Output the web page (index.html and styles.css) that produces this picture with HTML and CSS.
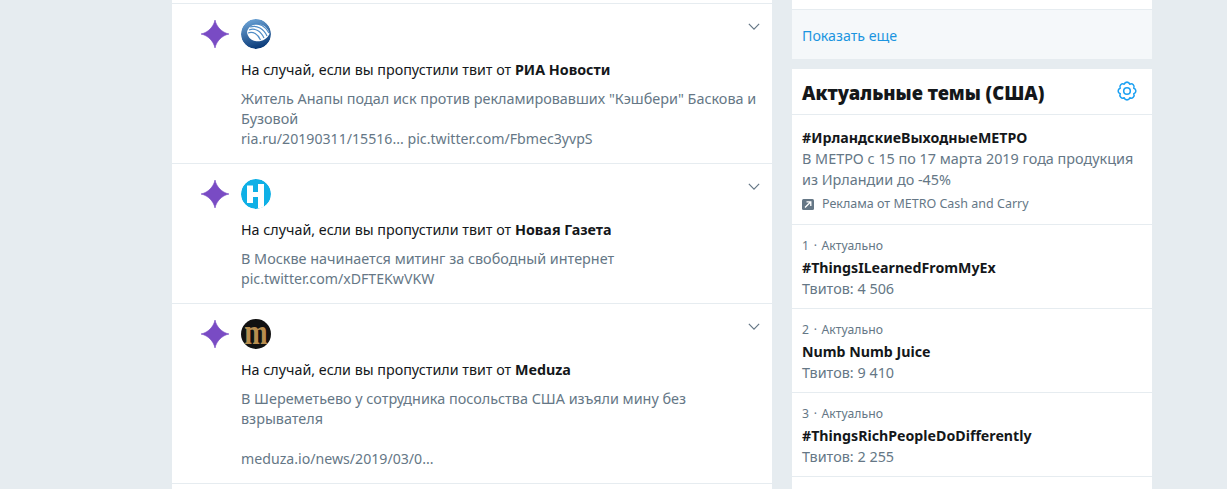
FILE: index.html
```html
<!DOCTYPE html>
<html lang="ru">
<head>
    <meta charset="UTF-8">
    <meta name="viewport" content="width=device-width, initial-scale=1.0">
    <title>Twitter</title>
    <link rel="stylesheet" href="styles.css">
</head>
<body>
    <div class="page">
        <main class="timeline">
            <div class="top-strip"></div>

            <article class="tweet tweet-ria">
                <svg class="star" viewBox="0 0 30 30"><path d="M15 1C16.500 8 22 13.500 29 15C22 16.500 16.500 22 15 29C13.500 22 8 16.500 1 15C8 13.500 13.500 8 15 1Z"/></svg>
                <div class="tweet-body">
                    <svg class="avatar" viewBox="0 0 30 30">
                        <defs>
                            <linearGradient id="riaBlue" x1="0.2" y1="0" x2="0.5" y2="1">
                                <stop offset="0" stop-color="#6fa6d8"/>
                                <stop offset="1" stop-color="#0a3a78"/>
                            </linearGradient>
                        </defs>
                        <circle cx="15" cy="15" r="15" fill="url(#riaBlue)"/>
                        <path d="M6 13C8 6 15 4 21 6C26 8 28 12 28.5 15C26 20 20 23.5 14 22C9 21 6.5 17 6 13Z" fill="#fff"/>
                        <g fill="none" stroke="#4f8cc6" stroke-width="1.2">
                            <path d="M11 5.5C18 3 25 8 28 14"/>
                            <path d="M9 8C16 5.5 23 10 26 17"/>
                            <path d="M8 11C14 8.5 20 12 23 19"/>
                            <path d="M7 14C12 12 17 15 19.5 21"/>
                        </g>
                    </svg>
                    <p class="reason">На случай, если вы пропустили твит от <b>РИА Новости</b></p>
                    <p class="text">Житель Анапы подал иск против рекламировавших "Кэшбери" Баскова и Бузовой<br><span class="link">ria.ru/20190311/15516... pic.twitter.com/Fbmec3yvpS</span></p>
                </div>
                <svg class="caret" viewBox="0 0 14 8"><path d="M1 1L7 7L13 1"/></svg>
            </article>

            <article class="tweet tweet-novaya">
                <svg class="star" viewBox="0 0 30 30"><path d="M15 1C16.500 8 22 13.500 29 15C22 16.500 16.500 22 15 29C13.500 22 8 16.500 1 15C8 13.500 13.500 8 15 1Z"/></svg>
                <div class="tweet-body">
                    <svg class="avatar" viewBox="0 0 30 30">
                        <circle cx="15" cy="15" r="15" fill="#0fb0e6"/>
                        <path d="M6 6.5H12V13H17V5H23V29H17V18H12V24H6Z" fill="#fff"/>
                    </svg>
                    <p class="reason">На случай, если вы пропустили твит от <b>Новая Газета</b></p>
                    <p class="text">В Москве начинается митинг за свободный интернет<br><span class="link">pic.twitter.com/xDFTEKwVKW</span></p>
                </div>
                <svg class="caret" viewBox="0 0 14 8"><path d="M1 1L7 7L13 1"/></svg>
            </article>

            <article class="tweet tweet-meduza">
                <svg class="star" viewBox="0 0 30 30"><path d="M15 1C16.500 8 22 13.500 29 15C22 16.500 16.500 22 15 29C13.500 22 8 16.500 1 15C8 13.500 13.500 8 15 1Z"/></svg>
                <div class="tweet-body">
                    <div class="avatar avatar-meduza"><span>m</span></div>
                    <p class="reason">На случай, если вы пропустили твит от <b>Meduza</b></p>
                    <p class="text">В Шереметьево у сотрудника посольства США изъяли мину без взрывателя<br><br><span class="link">meduza.io/news/2019/03/0...</span></p>
                </div>
                <svg class="caret" viewBox="0 0 14 8"><path d="M1 1L7 7L13 1"/></svg>
            </article>
        </main>

        <aside class="sidebar">
            <div class="card who">
                <div class="who-top"></div>
                <a class="show-more">Показать еще</a>
            </div>

            <div class="card trends">
                <div class="trends-head">
                    <h2>Актуальные темы (США)</h2>
                    <svg class="gear" viewBox="0 0 24 24">
                        <circle cx="12" cy="12" r="3.6"/>
                        <path d="M15.06 4.61A3.2 3.2 0 0 1 19.39 8.94A3.2 3.2 0 0 1 19.39 15.06A3.2 3.2 0 0 1 15.06 19.39A3.2 3.2 0 0 1 8.94 19.39A3.2 3.2 0 0 1 4.61 15.06A3.2 3.2 0 0 1 4.61 8.94A3.2 3.2 0 0 1 8.94 4.61A3.2 3.2 0 0 1 15.06 4.61Z"/>
                    </svg>
                </div>

                <div class="trend promoted">
                    <div class="trend-name">#ИрландскиеВыходныеМЕТРО</div>
                    <div class="trend-desc">В МЕТРО с 15 по 17 марта 2019 года продукция из Ирландии до -45%</div>
                    <div class="trend-ad">
                        <svg class="ad-icon" viewBox="0 0 12 11">
                            <rect width="12" height="11" rx="1.5" fill="#657786"/>
                            <path d="M3 8.5L8.5 3M4.5 2.8H8.8V7" fill="none" stroke="#fff" stroke-width="1.3"/>
                        </svg>
                        Реклама от METRO Cash and Carry
                    </div>
                </div>

                <div class="trend">
                    <div class="trend-meta">1 · Актуально</div>
                    <div class="trend-name">#ThingsILearnedFromMyEx</div>
                    <div class="trend-count">Твитов: 4 506</div>
                </div>
                <div class="trend">
                    <div class="trend-meta">2 · Актуально</div>
                    <div class="trend-name">Numb Numb Juice</div>
                    <div class="trend-count">Твитов: 9 410</div>
                </div>
                <div class="trend">
                    <div class="trend-meta">3 · Актуально</div>
                    <div class="trend-name">#ThingsRichPeopleDoDifferently</div>
                    <div class="trend-count">Твитов: 2 255</div>
                </div>
            </div>
        </aside>
    </div>
</body>
</html>
```

FILE: styles.css
```css
* {
    margin: 0;
    padding: 0;
    box-sizing: border-box;
}

html, body {
    height: 489px;
    overflow: hidden;
}

body {
    font-family: 'Noto Sans', sans-serif;
    background: #e6ecf0;
    color: #14171a;
}

.page {
    display: flex;
    gap: 20px;
    margin-left: 172px;
    width: 980px;
}

.timeline {
    width: 600px;
    background: #fff;
    height: 489px;
}

.top-strip {
    height: 4px;
    border-bottom: 1px solid #e6ecf0;
}

.tweet {
    position: relative;
    display: flex;
    padding: 15px 12px 0 28px;
    border-bottom: 1px solid #e6ecf0;
}

.tweet-ria { height: 160px; }
.tweet-novaya { height: 140px; }
.tweet-meduza { height: 180px; }

.star {
    width: 30px;
    height: 30px;
    flex: none;
    fill: #794bc4;
    stroke: #794bc4;
    stroke-width: 0.6;
    stroke-linejoin: round;
    margin-right: 11px;
}

.tweet-body {
    flex: 1;
}

.avatar {
    display: block;
    width: 30px;
    height: 30px;
    border-radius: 50%;
}

.avatar-meduza {
    background: #111;
    color: #b88d4f;
    font-family: 'Liberation Serif', serif;
    font-weight: bold;
    font-size: 28px;
    line-height: 25px;
    text-align: center;
}

.avatar-meduza span {
    display: inline-block;
    transform: scaleY(1.3);
}

.reason {
    font-size: 14.3px;
    line-height: 20px;
    margin-top: 11px;
}

.reason b {
    font-weight: 700;
}

.text {
    font-size: 14.4px;
    line-height: 20px;
    color: #657786;
    margin-top: 9px;
}

.link {
    font-size: 14.15px;
}

.caret {
    position: absolute;
    top: 19px;
    right: 12px;
    width: 12px;
    height: 7px;
    fill: none;
    stroke: #657786;
    stroke-width: 1.4;
}

.sidebar {
    width: 360px;
}

.card {
    background: #fff;
}

.who-top {
    height: 10px;
    border-bottom: 1px solid #e6ecf0;
}

.show-more {
    display: block;
    height: 49px;
    background: #f5f8fa;
    color: #1b95e0;
    font-size: 14.2px;
    line-height: 51px;
    padding-left: 10px;
}

.trends {
    margin-top: 10px;
    height: 420px;
}

.trends-head {
    display: flex;
    justify-content: space-between;
    align-items: center;
    height: 46px;
    padding: 0 15px 0 10px;
    border-bottom: 1px solid #e6ecf0;
}

.trends-head h2 {
    font-size: 18.5px;
    font-weight: 900;
    margin-top: 2px;
}

.gear {
    width: 22px;
    height: 22px;
    margin-right: -1px;
    margin-bottom: 1px;
    fill: none;
    stroke: #1da1f2;
    stroke-width: 1.7;
    stroke-linejoin: round;
}

.trend {
    height: 84px;
    padding: 11px 10px 0;
    border-bottom: 1px solid #e6ecf0;
}

.promoted {
    height: 110px;
    padding-top: 12px;
}

.trend-name {
    font-size: 14.2px;
    font-weight: 700;
    line-height: 21px;
}

.trend-meta + .trend-name {
    margin-top: 1px;
}

.trend-desc,
.trend-count {
    font-size: 14.4px;
    line-height: 21px;
    color: #657786;
}

.trend-meta {
    font-size: 12.2px;
    line-height: 20px;
    word-spacing: 1.5px;
    color: #657786;
}

.trend-ad {
    display: flex;
    align-items: center;
    gap: 8px;
    font-size: 12.5px;
    line-height: 20px;
    color: #657786;
    margin-top: 4px;
}

.ad-icon {
    width: 12px;
    height: 11px;
}
```
